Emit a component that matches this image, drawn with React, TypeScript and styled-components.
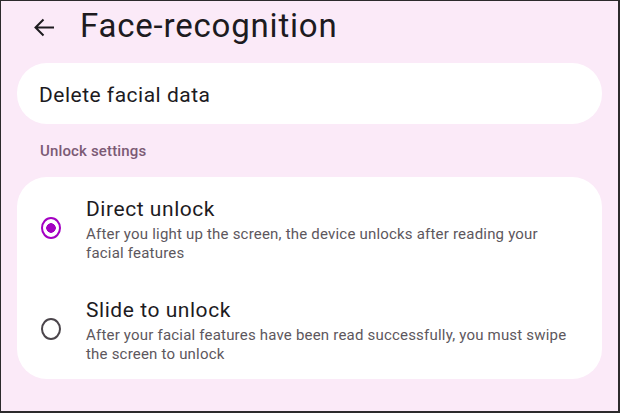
import React from "react";
import styled, { createGlobalStyle } from "styled-components";

const GlobalStyle = createGlobalStyle`
  html, body {
    margin: 0;
    padding: 0;
    background: #fbeaf8;
  }
  * {
    box-sizing: border-box;
  }
`;

const Screen = styled.div`
  width: 620px;
  height: 413px;
  background: #fbeaf8;
  border-style: solid;
  border-color: #2c2a2c;
  border-width: 1px 2px 2px 1px;
  font-family: Roboto, "Noto Sans", sans-serif;
  color: #1d1b1f;
  overflow: hidden;
`;

const Header = styled.header`
  display: flex;
  align-items: center;
  height: 50px;
  padding-left: 32px;
  gap: 25px;
`;

const BackButton = styled.button`
  display: flex;
  align-items: center;
  justify-content: center;
  width: 22px;
  height: 22px;
  padding: 0;
  border: none;
  background: none;
  color: #1d1b1f;
  margin-top: 2px;
`;

const Title = styled.h1`
  margin: 0;
  font-size: 33px;
  line-height: 40px;
  font-weight: 400;
  letter-spacing: 0.8px;
`;

const Content = styled.main`
  display: flex;
  flex-direction: column;
  padding: 12px 16px 0;
`;

const Card = styled.section`
  background: #ffffff;
  border-radius: 30px;
  display: flex;
  flex-direction: column;
`;

const ActionRow = styled.div`
  display: flex;
  align-items: center;
  height: 61px;
  padding: 2px 22px 0;
  font-size: 21px;
  line-height: 24px;
  letter-spacing: 0.5px;
`;

const SectionLabel = styled.div`
  font-size: 15px;
  line-height: 20px;
  font-weight: 500;
  letter-spacing: 0.15px;
  color: #7c5a75;
  padding-left: 23px;
  margin: 17px 0 16px;
`;

const OptionRow = styled.label`
  display: flex;
  align-items: center;
  padding: 19px 30px 15px 24px;
  gap: 25px;
`;

const Radio = styled.span<{ $checked?: boolean }>`
  flex: none;
  width: 20px;
  height: 20px;
  margin-bottom: 3px;
  display: flex;
  align-items: center;
  justify-content: center;

  &::before {
    content: "";
    width: 18px;
    height: 18px;
    border-radius: 50%;
    border: 2px solid ${(p) => (p.$checked ? "#a300c2" : "#4b454b")};
    background: ${(p) =>
      p.$checked ? "radial-gradient(circle, #a300c2 0 4.5px, transparent 5px)" : "none"};
  }
`;

const OptionText = styled.div`
  display: flex;
  flex-direction: column;
  gap: 3px;
`;

const OptionTitle = styled.div`
  font-size: 21px;
  line-height: 26px;
  letter-spacing: 0.55px;
`;

const OptionDesc = styled.div`
  font-size: 15px;
  line-height: 19px;
  letter-spacing: 0.2px;
  color: #5d575d;
`;

const options = [
  {
    title: "Direct unlock",
    desc: "After you light up the screen, the device unlocks after reading your facial features",
    checked: true,
  },
  {
    title: "Slide to unlock",
    desc: "After your facial features have been read successfully, you must swipe the screen to unlock",
    checked: false,
  },
];

const BackArrow = () => (
  <svg width="22" height="19" viewBox="0 0 22 19" fill="none">
    <path
      d="M21 9.5H2.5M10.5 1.5L2.5 9.5L10.5 17.5"
      stroke="currentColor"
      strokeWidth="2"
    />
  </svg>
);

export default function App() {
  return (
    <Screen>
      <GlobalStyle />
      <Header>
        <BackButton aria-label="Back">
          <BackArrow />
        </BackButton>
        <Title>Face-recognition</Title>
      </Header>
      <Content>
        <Card>
          <ActionRow>Delete facial data</ActionRow>
        </Card>
        <SectionLabel>Unlock settings</SectionLabel>
        <Card>
          {options.map((o) => (
            <OptionRow key={o.title}>
              <Radio $checked={o.checked} />
              <OptionText>
                <OptionTitle>{o.title}</OptionTitle>
                <OptionDesc>{o.desc}</OptionDesc>
              </OptionText>
            </OptionRow>
          ))}
        </Card>
      </Content>
    </Screen>
  );
}
